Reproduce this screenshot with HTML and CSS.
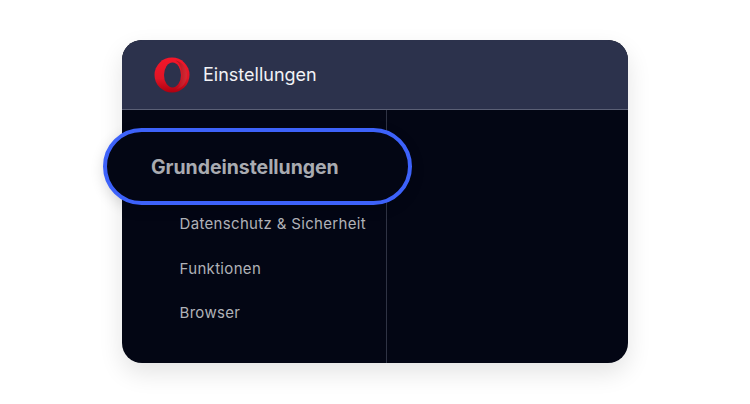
FILE: index.html
```html
<!DOCTYPE html>
<html lang="de">
<head>
    <meta charset="UTF-8">
    <title>Einstellungen</title>
    <link rel="stylesheet" href="styles.css">
</head>
<body>
    <div class="window">
        <header class="titlebar">
            <svg class="logo" width="36" height="36" viewBox="0 0 36 36">
                <defs>
                    <linearGradient id="operaRed" x1="0" y1="0" x2="0" y2="1">
                        <stop offset="0" stop-color="#f5162a"/>
                        <stop offset="0.6" stop-color="#e01525"/>
                        <stop offset="1" stop-color="#ad0010"/>
                    </linearGradient>
                    <linearGradient id="operaRight" x1="0" y1="0" x2="1" y2="0">
                        <stop offset="0" stop-color="#ab0c18"/>
                        <stop offset="1" stop-color="#d42a35"/>
                    </linearGradient>
                </defs>
                <circle cx="18" cy="18" r="17.5" fill="url(#operaRed)"/>
                <path d="M20 3.500c7.500 0 13 6.500 13 14.500s-5.500 14.500-13 14.500c5 0 7.500-7 7.500-14.500S25 3.500 20 3.500z" fill="url(#operaRight)"/>
                <ellipse cx="18.500" cy="18" rx="8.500" ry="12.500" fill="#2c324c"/>
            </svg>
            <span class="title">Einstellungen</span>
        </header>
        <div class="content">
            <nav class="sidebar">
                <div class="active-item">Grundeinstellungen</div>
                <ul class="sub-items">
                    <li>Datenschutz &amp; Sicherheit</li>
                    <li>Funktionen</li>
                    <li>Browser</li>
                </ul>
            </nav>
            <main class="panel"></main>
        </div>
    </div>
</body>
</html>
```

FILE: styles.css
```css
html, body {
    margin: 0;
    height: 100%;
    background-color: #fff;
    font-family: Inter, "Liberation Sans", sans-serif;
    overflow: hidden;
}

body {
    padding: 40px 122px 0;
    box-sizing: border-box;
}

.window {
    width: 506px;
    height: 323px;
    display: flex;
    flex-direction: column;
    background-color: #030614;
    border-radius: 20px;
    box-shadow: 0 10px 24px rgba(0, 0, 0, 0.11);
}

.titlebar {
    height: 69px;
    flex: none;
    display: flex;
    align-items: center;
    padding-left: 32px;
    background-color: #2c324c;
    border-bottom: 1px solid #5b6075;
    border-radius: 20px 20px 0 0;
}

.logo {
    flex: none;
}

.title {
    margin-left: 13px;
    font-size: 18px;
    color: #f2f3f6;
}

.content {
    flex: 1;
    display: flex;
}

.sidebar {
    width: 264px;
    flex: none;
    border-right: 1px solid #2f3344;
}

.active-item {
    position: relative;
    width: 309px;
    height: 77px;
    box-sizing: border-box;
    margin: 18px 0 0 -19px;
    padding: 1px 0 0 44px;
    display: flex;
    align-items: center;
    border: 4px solid #3d62fa;
    border-radius: 39px;
    background-color: #030614;
    box-shadow: 0 4px 14px rgba(0, 0, 0, 0.14);
    font-size: 19.500px;
    font-weight: 700;
    letter-spacing: -0.05px;
    color: #a9abb1;
}

.sub-items {
    list-style: none;
    margin: 0;
    padding: 0 0 0 57.500px;
}

.sub-items li {
    height: 44.500px;
    line-height: 38px;
    font-size: 15px;
    font-weight: 400;
    letter-spacing: 0.33px;
    color: #b0b2b8;
}

.panel {
    flex: 1;
}
```
